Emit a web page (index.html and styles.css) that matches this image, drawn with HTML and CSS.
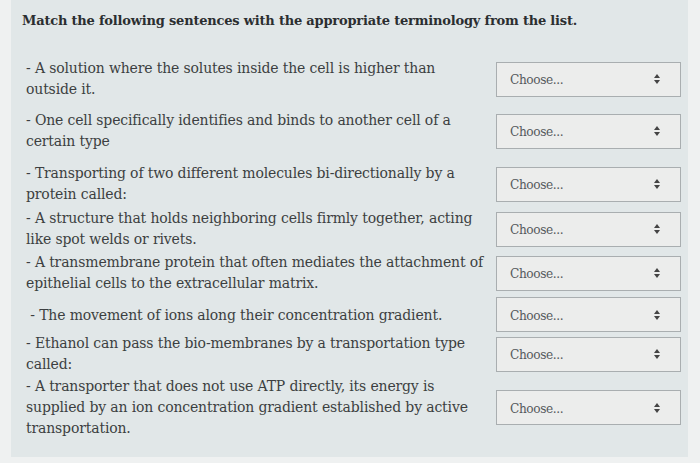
FILE: index.html
```html
<!DOCTYPE html>
<html>
<head>
<meta charset="utf-8">
<link rel="stylesheet" href="styles.css">
</head>
<body>
<div class="panel">
  <h1 class="title">Match the following sentences with the appropriate terminology from the list.</h1>
  <div class="rows">
    <div class="row r1">
      <div class="q">- A solution where the solutes inside the cell is higher than outside it.</div>
      <div class="sel"><span>Choose...</span><svg class="arr" viewBox="0 0 6 10" width="6" height="10"><path d="M3 0 L6 4 H0 Z M0 6 H6 L3 10 Z" fill="#444"/></svg></div>
    </div>
    <div class="row r2">
      <div class="q">- One cell specifically identifies and binds to another cell of a certain type</div>
      <div class="sel"><span>Choose...</span><svg class="arr" viewBox="0 0 6 10" width="6" height="10"><path d="M3 0 L6 4 H0 Z M0 6 H6 L3 10 Z" fill="#444"/></svg></div>
    </div>
    <div class="row r3">
      <div class="q">- Transporting of two different molecules bi-directionally by a protein called:</div>
      <div class="sel"><span>Choose...</span><svg class="arr" viewBox="0 0 6 10" width="6" height="10"><path d="M3 0 L6 4 H0 Z M0 6 H6 L3 10 Z" fill="#444"/></svg></div>
    </div>
    <div class="row r4">
      <div class="q">- A structure that holds neighboring cells firmly together, acting like spot welds or rivets.</div>
      <div class="sel"><span>Choose...</span><svg class="arr" viewBox="0 0 6 10" width="6" height="10"><path d="M3 0 L6 4 H0 Z M0 6 H6 L3 10 Z" fill="#444"/></svg></div>
    </div>
    <div class="row r5">
      <div class="q">- A transmembrane protein that often mediates the attachment of epithelial cells to the extracellular matrix.</div>
      <div class="sel"><span>Choose...</span><svg class="arr" viewBox="0 0 6 10" width="6" height="10"><path d="M3 0 L6 4 H0 Z M0 6 H6 L3 10 Z" fill="#444"/></svg></div>
    </div>
    <div class="row r6">
      <div class="q">&nbsp;- The movement of ions along their concentration gradient.</div>
      <div class="sel"><span>Choose...</span><svg class="arr" viewBox="0 0 6 10" width="6" height="10"><path d="M3 0 L6 4 H0 Z M0 6 H6 L3 10 Z" fill="#444"/></svg></div>
    </div>
    <div class="row r7">
      <div class="q">- Ethanol can pass the bio-membranes by a transportation type called:</div>
      <div class="sel"><span>Choose...</span><svg class="arr" viewBox="0 0 6 10" width="6" height="10"><path d="M3 0 L6 4 H0 Z M0 6 H6 L3 10 Z" fill="#444"/></svg></div>
    </div>
    <div class="row r8">
      <div class="q">- A transporter that does not use ATP directly, its energy is supplied by an ion concentration gradient established by active transportation.</div>
      <div class="sel"><span>Choose...</span><svg class="arr" viewBox="0 0 6 10" width="6" height="10"><path d="M3 0 L6 4 H0 Z M0 6 H6 L3 10 Z" fill="#444"/></svg></div>
    </div>
  </div>
</div>
</body>
</html>
```

FILE: styles.css
```css
html, body {
  margin: 0;
  padding: 0;
  background: #eff1f1;
}
body {
  width: 700px;
  height: 463px;
  overflow: hidden;
  font-family: "DejaVu Serif", "Liberation Serif", serif;
  color: #3c3f41;
}
.panel {
  margin-left: 11px;
  width: 677px;
  height: 457px;
  background: #e1e7e8;
  box-sizing: border-box;
  padding-top: 12px;
}
.title {
  margin: 0 0 0 11px;
  font-size: 13px;
  font-weight: bold;
  line-height: 17px;
  color: #2b2e30;
  letter-spacing: -0.2px;
}
.rows {
  display: flex;
  flex-direction: column;
  margin-top: 29px;
}
.row {
  display: flex;
  align-items: center;
  padding-left: 15px;
}
.q {
  width: 462px;
  font-size: 14px;
  line-height: 21px;
  letter-spacing: -0.15px;
}
.sel {
  margin-left: 8px;
  width: 185px;
  height: 35px;
  box-sizing: border-box;
  border: 1px solid #a9aeb0;
  background: #ecedec;
  display: flex;
  align-items: center;
  justify-content: space-between;
  padding: 0 20px 0 13px;
  font-size: 13.5px;
  font-stretch: condensed;
  letter-spacing: -0.4px;
  color: #55595c;
}
.r2 { margin-top: 10px; }
.r3 { margin-top: 11px; }
.r4 { margin-top: 3px; }
.r5 { margin-top: 2px; }
.r6 { margin-top: 3px; }
.r7 { margin-top: 1px; }
.r8 { margin-top: 1px; }
.r6 .q { line-height: 22px; }
```
